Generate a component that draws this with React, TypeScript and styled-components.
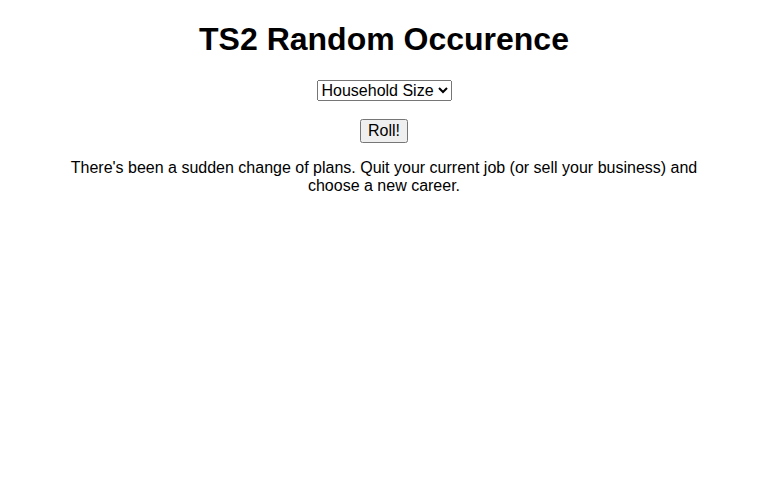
import React from "react";
import styled, { createGlobalStyle } from "styled-components";

const GlobalStyle = createGlobalStyle`
  body {
    margin: 8px;
    font-family: "Liberation Sans", Arial, sans-serif;
    background: #ffffff;
    color: #000000;
  }
`;

const Page = styled.main`
  display: flex;
  flex-direction: column;
  align-items: center;
  text-align: center;
`;

const Title = styled.h1`
  font-size: 32px;
  font-weight: bold;
  margin: 13.44px 0 21.44px;
`;

const Row = styled.div<{ $gap: number }>`
  margin: 0 0 ${(p) => p.$gap}px;
`;

const Picker = styled.select`
  font-family: "Liberation Sans", Arial, sans-serif;
  font-size: 16px;
`;

const RollButton = styled.button`
  font-family: "Liberation Sans", Arial, sans-serif;
  font-size: 16px;
`;

const Outcome = styled.p`
  font-size: 16px;
  margin: 0;
  padding: 0 54px;
`;

export default function App() {
  return (
    <>
      <GlobalStyle />
      <Page>
        <Title>TS2 Random Occurence</Title>
        <Row $gap={18}>
          <Picker defaultValue="household">
            <option value="household">Household Size</option>
          </Picker>
        </Row>
        <Row $gap={16}>
          <RollButton>Roll!</RollButton>
        </Row>
        <Outcome>
          There's been a sudden change of plans. Quit your current job (or sell
          your business) and choose a new career.
        </Outcome>
      </Page>
    </>
  );
}
